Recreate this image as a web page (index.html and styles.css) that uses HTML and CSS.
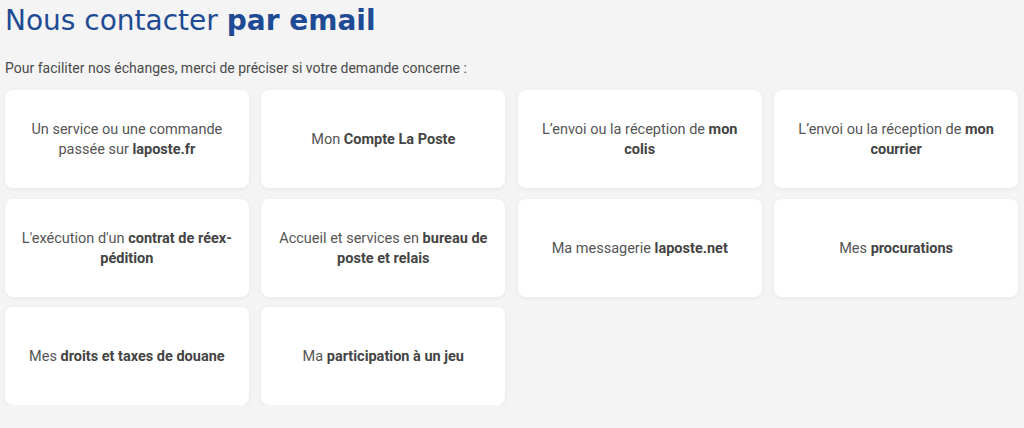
FILE: index.html
```html
<!DOCTYPE html>
<html lang="fr">
<head>
<meta charset="utf-8">
<link rel="stylesheet" href="styles.css">
</head>
<body>
<main class="page">
  <h1 class="title">Nous contacter <strong>par email</strong></h1>
  <p class="intro">Pour faciliter nos échanges, merci de préciser si votre demande concerne :</p>
  <div class="grid">
    <a class="card"><span>Un service ou une commande passée sur <b>laposte.fr</b></span></a>
    <a class="card"><span>Mon <b>Compte La Poste</b></span></a>
    <a class="card"><span>L’envoi ou la réception de <b>mon colis</b></span></a>
    <a class="card"><span>L’envoi ou la réception de <b>mon courrier</b></span></a>
    <a class="card"><span>L'exécution d'un <b>contrat de réex-pédition</b></span></a>
    <a class="card"><span>Accueil et services en <b>bureau de poste et relais</b></span></a>
    <a class="card"><span>Ma messagerie <b>laposte.net</b></span></a>
    <a class="card"><span>Mes <b>procurations</b></span></a>
    <a class="card"><span>Mes <b>droits et taxes de douane</b></span></a>
    <a class="card"><span>Ma <b>participation à un jeu</b></span></a>
  </div>
</main>
</body>
</html>
```
FILE: styles.css
```css
html, body {
  margin: 0;
  padding: 0;
  background: #f4f4f4;
}
.page {
  padding: 0 6px 0 5px;
  font-family: Roboto, "Liberation Sans", sans-serif;
}
.title {
  margin: 0;
  padding-top: 2px;
  font-family: "DejaVu Sans", "Open Sans", sans-serif;
  font-weight: 400;
  font-size: 28px;
  line-height: 38px;
  color: #1f4b94;
}
.title strong {
  font-weight: 700;
}
.intro {
  margin: 18px 0 12px;
  font-size: 14px;
  line-height: 20px;
  color: #4a4a4a;
}
.grid {
  display: grid;
  grid-template-columns: repeat(4, 1fr);
  gap: 10.5px 12.7px;
}
.card {
  display: flex;
  align-items: center;
  justify-content: center;
  height: 98px;
  padding: 2px 13px 0;
  box-sizing: border-box;
  background: #fff;
  border-radius: 8px;
  box-shadow: 0 1px 4px rgba(0,0,0,0.06);
  text-align: center;
  font-size: 14.5px;
  line-height: 20px;
  color: #555;
}
.card b {
  font-weight: 700;
  color: #444;
}
```
